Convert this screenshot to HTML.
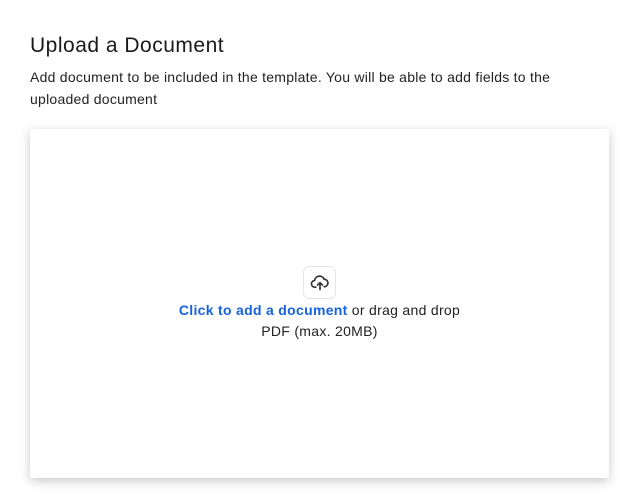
<!DOCTYPE html><html><head><style>
body{margin:0;width:633px;height:491px;background:#fff;font-family:"Liberation Sans",sans-serif;color:#1f1f1f;overflow:hidden;position:relative}
h1{position:absolute;left:30px;top:34px;margin:0;font-size:21px;font-weight:400;color:#1a1a1a;letter-spacing:0.5px}
p.s{position:absolute;left:30px;top:66px;margin:0;width:550px;font-size:14px;line-height:22px;color:#222;letter-spacing:0.25px}
.card{position:absolute;left:30px;top:129px;width:579px;height:349px;background:#fff;box-shadow:0 3px 10px rgba(0,0,0,.22)}
.ic{position:absolute;left:273px;top:137px;width:33px;height:33px;border:1px solid #e6e6e6;border-radius:6px;box-sizing:border-box}
.ic svg{position:absolute;left:6px;top:6px}
.t{position:absolute;left:0;width:579px;text-align:center;font-size:14px;color:#222;letter-spacing:0.3px}
b{color:#1662e0}
</style></head><body>
<h1>Upload a Document</h1>
<p class="s">Add document to be included in the template. You will be able to add fields to the uploaded document</p>
<div class="card">
<div class="ic"><svg width="20" height="20" viewBox="0 0 24 24" fill="none" stroke="#333" stroke-width="2" stroke-linecap="round" stroke-linejoin="round"><path d="M7 17H6a4 4 0 0 1-.5-8A6 6 0 0 1 17 7.5a4.5 4.5 0 0 1 1 8.9h-1"/><path d="M12 20v-8M9 14.5l3-3 3 3"/></svg></div>
<div class="t" style="top:173px"><b>Click to add a document</b> or drag and drop</div>
<div class="t" style="top:194px">PDF (max. 20MB)</div>
</div>
</body></html>
